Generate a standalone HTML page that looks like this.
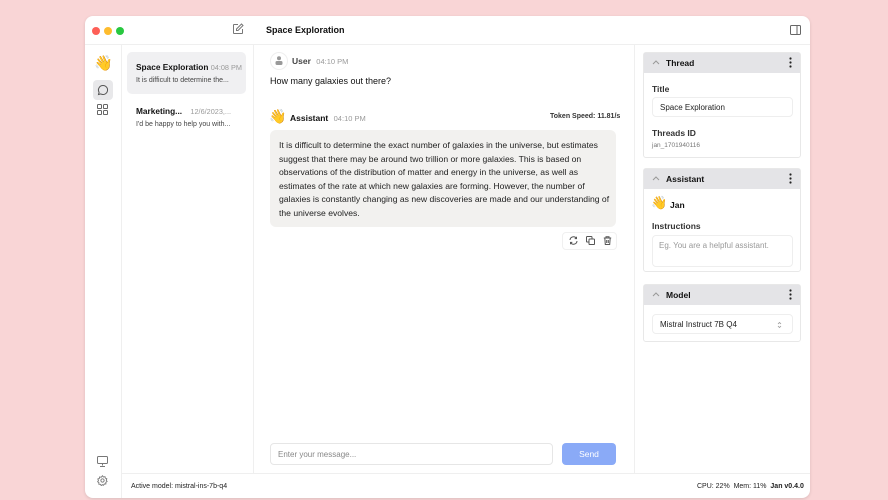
<!DOCTYPE html>
<html><head><meta charset="utf-8"><style>
*{box-sizing:border-box;margin:0;padding:0}
body{width:888px;height:500px;background:#f9d5d6;font-family:"Liberation Sans",sans-serif;color:#111;position:relative;overflow:hidden}
.win{position:absolute;left:85px;top:16px;width:725px;height:482px;background:#fff;border-radius:8px;overflow:hidden;box-shadow:0 1px 3px rgba(0,0,0,.12)}
.abs{position:absolute}
.dot{position:absolute;top:11px;width:8px;height:8px;border-radius:50%}
.b{font-weight:bold}
.gray{color:#9a9a9a}
.card{position:absolute;left:643px;width:158px;border:1px solid #e8e8e8;border-radius:3px;background:#fff}
.card .hd{height:20px;background:#e4e4e7;font-size:8.5px;font-weight:bold;padding:5px 0 0 22px;position:relative}
.card .hd .car{position:absolute;left:8px;top:7px}
.card .hd .km{position:absolute;right:8px;top:4px}
.lbl{font-size:8.5px;font-weight:bold;color:#333}
.inp{border:1px solid #eee;border-radius:4px;font-size:8px}
</style></head><body>
<div class="win">
  <div class="dot" style="left:7px;background:#fe5f57"></div>
  <div class="dot" style="left:19px;background:#febc2e"></div>
  <div class="dot" style="left:31px;background:#28c840"></div>
  <svg class="abs" style="left:147px;top:7px" width="12" height="12" viewBox="0 0 12 12" fill="none" stroke="#777" stroke-width="1"><path d="M6 1.5H2a.5.5 0 0 0-.5.5v8a.5.5 0 0 0 .5.5h8a.5.5 0 0 0 .5-.5V6"/><path d="M9.5 1l1.5 1.5L6 7.5H4.5V6z"/></svg>
  <div class="abs b" style="left:181px;top:9px;font-size:9px">Space Exploration</div>
  <svg class="abs" style="left:705px;top:9px" width="11" height="10" viewBox="0 0 11 10" fill="none" stroke="#666" stroke-width="1"><rect x=".5" y=".5" width="10" height="9" rx="1"/><path d="M7 .5v9"/></svg>
  <div class="abs" style="left:0;top:28px;width:725px;height:1px;background:#efefef"></div>
  <div class="abs" style="left:36px;top:28px;width:1px;height:454px;background:#efefef"></div>
  <div class="abs" style="left:168px;top:28px;width:1px;height:429px;background:#efefef"></div>
  <div class="abs" style="left:549px;top:28px;width:1px;height:429px;background:#efefef"></div>
  <div class="abs" style="left:37px;top:457px;width:688px;height:1px;background:#efefef"></div>
  <div class="abs" style="left:9px;top:38px;font-size:15px">👋</div>
  <div class="abs" style="left:8px;top:64px;width:20px;height:20px;background:#e8e8ea;border-radius:4px"></div>
  <svg class="abs" style="left:12px;top:68px" width="12" height="12" viewBox="0 0 12 12" fill="none" stroke="#555" stroke-width="1"><path d="M6 1.5a4.5 4.5 0 1 1-2.2 8.4L1.5 10.5l.6-2.2A4.5 4.5 0 0 1 6 1.5z"/></svg>
  <svg class="abs" style="left:12px;top:88px" width="11" height="11" viewBox="0 0 11 11" fill="none" stroke="#666" stroke-width="1"><rect x=".5" y=".5" width="4" height="4" rx=".8"/><rect x="6.5" y=".5" width="4" height="4" rx=".8"/><rect x=".5" y="6.5" width="4" height="4" rx=".8"/><rect x="6.5" y="6.5" width="4" height="4" rx=".8"/></svg>
  <svg class="abs" style="left:12px;top:440px" width="11" height="11" viewBox="0 0 11 11" fill="none" stroke="#777" stroke-width="1"><rect x=".5" y=".5" width="10" height="7" rx="1"/><path d="M5.5 7.5v2M3 10.5h5"/></svg>
  <svg class="abs" style="left:12px;top:459px" width="11" height="11" viewBox="0 0 12 12" fill="none" stroke="#777" stroke-width="1"><circle cx="6" cy="6" r="1.8"/><path d="M6 .8l1 1.4 1.7-.4.4 1.7 1.6.6-.6 1.6.9 1.4-1.4.9.1 1.7-1.7.1-.9 1.4L6 10.6l-1.4.9-.9-1.4-1.7-.1.1-1.7-1.4-.9.9-1.4L.9 4.4l1.6-.6.4-1.7 1.7.4z"/></svg>
  <div class="abs" style="left:42px;top:36px;width:119px;height:42px;background:#f0f0f2;border-radius:5px"></div>
  <div class="abs" style="left:51px;top:46px;font-size:8.3px"><span class="b">Space Exploration</span> <span class="gray" style="font-size:7.3px">04:08 PM</span></div>
  <div class="abs" style="left:51px;top:61px;font-size:7px;color:#444">It is difficult to determine the...</div>
  <div class="abs" style="left:51px;top:90px;font-size:8.3px"><span class="b">Marketing...</span> <span class="gray" style="font-size:7.3px;margin-left:6px">12/6/2023,...</span></div>
  <div class="abs" style="left:51px;top:105px;font-size:7px;color:#444">I'd be happy to help you with...</div>
  <div class="abs" style="left:185px;top:36px;width:18px;height:18px;border-radius:50%;border:1px solid #eee"></div>
  <svg class="abs" style="left:190px;top:40px" width="8" height="9" viewBox="0 0 8 9" fill="#999"><circle cx="4" cy="2.2" r="2"/><rect x="0.5" y="5" width="7" height="4" rx="1.5"/></svg>
  <div class="abs" style="left:207px;top:40px;font-size:8.5px"><span class="b" style="color:#444">User</span> <span class="gray" style="font-size:7.5px;margin-left:3px">04:10 PM</span></div>
  <div class="abs" style="left:185px;top:60px;font-size:9px">How many galaxies out there?</div>
  <div class="abs" style="left:184px;top:92px;font-size:14px">👋</div>
  <div class="abs" style="left:205px;top:97px;font-size:8.5px"><span class="b">Assistant</span> <span class="gray" style="font-size:7.5px;margin-left:3px">04:10 PM</span></div>
  <div class="abs b" style="left:465px;top:97px;font-size:7px;color:#333">Token Speed: 11.81/s</div>
  <div class="abs" style="left:185px;top:114px;width:346px;height:97px;background:#f2f1ef;border-radius:6px;padding:9px 9px;font-size:8.6px;line-height:13.5px;color:#222;white-space:nowrap">It is difficult to determine the exact number of galaxies in the universe, but estimates<br>suggest that there may be around two trillion or more galaxies. This is based on<br>observations of the distribution of matter and energy in the universe, as well as<br>estimates of the rate at which new galaxies are forming. However, the number of<br>galaxies is constantly changing as new discoveries are made and our understanding of<br>the universe evolves.</div>
  <div class="abs" style="left:477px;top:216px;width:55px;height:18px;border:1px solid #f0f0f0;border-radius:4px"></div>
  <svg class="abs" style="left:484px;top:220px" width="9" height="9" viewBox="0 0 9 9" fill="none" stroke="#555" stroke-width="1"><path d="M1 4a3.5 3.5 0 0 1 6.5-1.5M8 5a3.5 3.5 0 0 1-6.5 1.5M7.5 .8v1.8H5.7M1.5 8.2V6.4h1.8"/></svg>
  <svg class="abs" style="left:501px;top:220px" width="9" height="9" viewBox="0 0 9 9" fill="none" stroke="#555" stroke-width="1"><rect x="3" y="3" width="5.5" height="5.5" rx=".8"/><path d="M6 3V1.3a.8.8 0 0 0-.8-.8H1.3a.8.8 0 0 0-.8.8v3.9a.8.8 0 0 0 .8.8H3"/></svg>
  <svg class="abs" style="left:518px;top:220px" width="9" height="9" viewBox="0 0 9 9" fill="none" stroke="#555" stroke-width="1"><path d="M.8 2h7.4M3 2V.8h3V2M1.8 2l.5 6.5h4.4L7.2 2M3.7 4v3M5.3 4v3"/></svg>
  <div class="abs inp" style="left:185px;top:427px;width:283px;height:22px;padding:6px 7px;color:#888;font-size:8px;border-color:#e6e6e6">Enter your message...</div>
  <div class="abs" style="left:477px;top:427px;width:54px;height:22px;background:#8aaaf7;border-radius:4px;color:#fff;font-size:8.5px;text-align:center;line-height:22px">Send</div>
  <div class="abs" style="left:46px;top:467px;font-size:7px;color:#222">Active model: mistral-ins-7b-q4</div>
  <div class="abs" style="left:612px;top:467px;font-size:7px;color:#222">CPU: 22%&nbsp; Mem: 11%&nbsp; <b>Jan v0.4.0</b></div>
</div>
<div class="card" style="top:52px;height:106px">
  <div class="hd"><svg class="car" width="8" height="5" viewBox="0 0 8 5" fill="none" stroke="#999" stroke-width="1"><path d="M1 4l3-3 3 3"/></svg>Thread<svg class="km" width="3" height="11" viewBox="0 0 3 11" fill="#222"><circle cx="1.5" cy="1.5" r="1.1"/><circle cx="1.5" cy="5.5" r="1.1"/><circle cx="1.5" cy="9.5" r="1.1"/></svg></div>
  <div class="abs lbl" style="left:8px;top:31px">Title</div>
  <div class="abs inp" style="left:8px;top:44px;width:141px;height:20px;padding:5px 7px;color:#222">Space Exploration</div>
  <div class="abs lbl" style="left:8px;top:75px">Threads ID</div>
  <div class="abs" style="left:8px;top:89px;font-size:6.5px;color:#777">jan_1701940116</div>
</div>
<div class="card" style="top:168px;height:104px">
  <div class="hd"><svg class="car" width="8" height="5" viewBox="0 0 8 5" fill="none" stroke="#999" stroke-width="1"><path d="M1 4l3-3 3 3"/></svg>Assistant<svg class="km" width="3" height="11" viewBox="0 0 3 11" fill="#222"><circle cx="1.5" cy="1.5" r="1.1"/><circle cx="1.5" cy="5.5" r="1.1"/><circle cx="1.5" cy="9.5" r="1.1"/></svg></div>
  <div class="abs" style="left:7px;top:26px;font-size:13px">👋</div>
  <div class="abs b" style="left:26px;top:31px;font-size:8.5px">Jan</div>
  <div class="abs lbl" style="left:8px;top:52px">Instructions</div>
  <div class="abs inp" style="left:8px;top:66px;width:141px;height:32px;padding:5px 6px;color:#999">Eg. You are a helpful assistant.</div>
</div>
<div class="card" style="top:284px;height:58px">
  <div class="hd"><svg class="car" width="8" height="5" viewBox="0 0 8 5" fill="none" stroke="#999" stroke-width="1"><path d="M1 4l3-3 3 3"/></svg>Model<svg class="km" width="3" height="11" viewBox="0 0 3 11" fill="#222"><circle cx="1.5" cy="1.5" r="1.1"/><circle cx="1.5" cy="5.5" r="1.1"/><circle cx="1.5" cy="9.5" r="1.1"/></svg></div>
  <div class="abs inp" style="left:8px;top:29px;width:141px;height:20px;padding:5px 7px;color:#222">Mistral Instruct 7B Q4<svg style="position:absolute;right:10px;top:6px" width="5" height="8" viewBox="0 0 5 8" fill="none" stroke="#999" stroke-width=".8"><path d="M1 3l1.5-1.5L4 3M1 5l1.5 1.5L4 5"/></svg></div>
</div>
</body></html>
